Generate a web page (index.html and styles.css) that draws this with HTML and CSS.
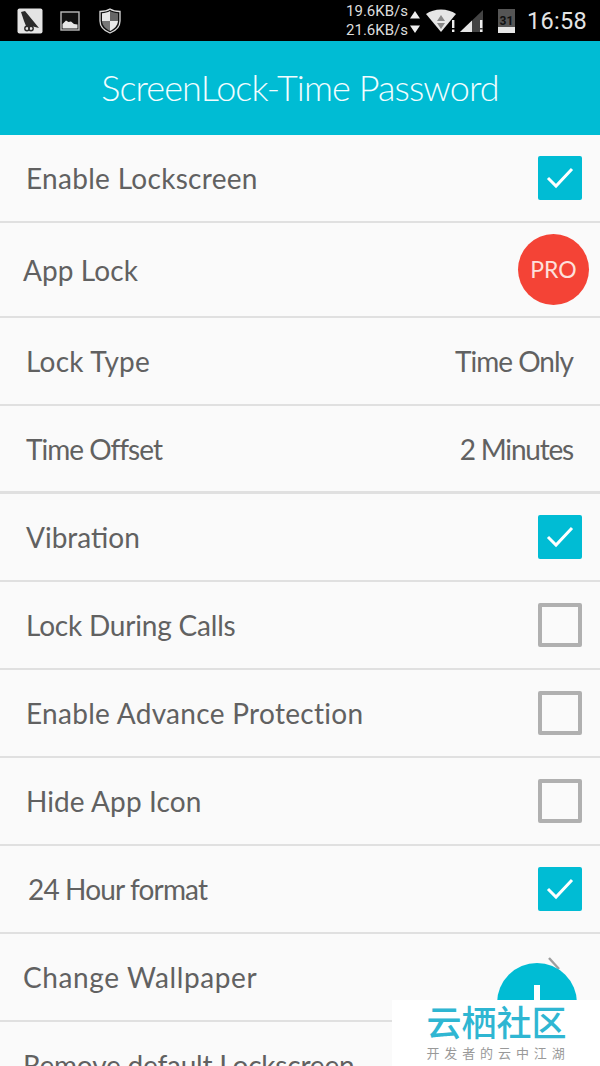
FILE: index.html
```html
<!DOCTYPE html>
<html lang="en">
<head>
<meta charset="utf-8">
<title>ScreenLock-Time Password</title>
<link rel="stylesheet" href="styles.css">
</head>
<body>
<div class="screen">
  <div class="status">
    <div class="status-left">
      <svg class="ic-app" viewBox="0 0 26 26"><rect x="0.5" y="0.5" width="25" height="25" rx="2" fill="#e4e4e4"/><path d="M4 4 L8 3 L22 20 L14 18 L9 18 L7 13 Z" fill="#2a2a2a"/><circle cx="10" cy="20.5" r="2.2" fill="none" stroke="#2a2a2a" stroke-width="1.4"/><circle cx="14" cy="20.5" r="2.2" fill="none" stroke="#2a2a2a" stroke-width="1.4"/></svg>
      <svg class="ic-pic" viewBox="0 0 20 20"><rect x="1" y="1" width="18" height="18" fill="#111" stroke="#bbb" stroke-width="1.4"/><path d="M2.5 17.5 V13 L6 9.5 L8.5 11 L11 10.5 L14 13 L17.5 13.5 V17.5 Z" fill="#e6e6e6"/></svg>
      <svg class="ic-shield" viewBox="0 0 22 26"><path d="M11 1 C14 3 18 3.5 21 3.5 V13 C21 19 16 23 11 25 C6 23 1 19 1 13 V3.5 C4 3.5 8 3 11 1 Z" fill="#111" stroke="#ddd" stroke-width="1.3"/><path d="M11 3 C8.5 4.5 6 5 3 5.2 V13 H11 Z" fill="#e8e8e8"/><path d="M11 3 C13.5 4.5 16 5 19 5.2 V13 H11 Z" fill="#666"/><path d="M3 13 H11 V23 C7 21 3.5 18 3 13 Z" fill="#777"/><path d="M19 13 H11 V23 C15 21 18.5 18 19 13 Z" fill="#e8e8e8"/></svg>
    </div>
    <div class="status-right">
      <div class="speed"><span>19.6KB/s</span><span>21.6KB/s</span></div>
      <svg class="ic-arrows" viewBox="0 0 10 26"><path d="M5 3 L10 10.5 H0 Z M0 17.5 H10 L5 25 Z" fill="#eee"/></svg>
      <svg class="ic-wifi" viewBox="0 0 32 24"><path d="M1 5 C9 -1 23 -1 31 5 L16 23 Z" fill="#e6e6e6"/><path d="M16 6 L20 12 H12 Z M12 14 H20 L16 20 Z" fill="#888"/><rect x="27" y="11" width="2.4" height="8" fill="#eee"/><rect x="27" y="20.5" width="2.4" height="2.5" fill="#eee"/></svg>
      <svg class="ic-signal" viewBox="0 0 24 24"><path d="M0 23 L23 1 V23 Z" fill="#444"/><path d="M0 23 L12 11.5 V23 Z" fill="#e6e6e6"/><rect x="20" y="11" width="2.4" height="8" fill="#eee"/><rect x="20" y="20.5" width="2.4" height="2.5" fill="#eee"/></svg>
      <div class="battery"><span>31</span></div>
      <div class="clock">16:58</div>
    </div>
  </div>
  <header class="bar">ScreenLock-Time Password</header>
  <main class="list">
    <div class="row r88"><span class="sp-p3">Enable Lockscreen</span><span class="check on"><svg viewBox="0 0 44 44"><path d="M10 22 L18 30 L34 13" fill="none" stroke="#fff" stroke-width="3"/></svg></span></div>
    <div class="row r95 tight"><span class="sp-p1">App Lock</span><span class="pro">PRO</span></div>
    <div class="row r88"><span class="sp-p2">Lock Type</span><span class="val sp-m10">Time Only</span></div>
    <div class="row r88 thick"><span class="sp-m10">Time Offset</span><span class="val sp-m12">2 Minutes</span></div>
    <div class="row r88"><span>Vibration</span><span class="check on"><svg viewBox="0 0 44 44"><path d="M10 22 L18 30 L34 13" fill="none" stroke="#fff" stroke-width="3"/></svg></span></div>
    <div class="row r88"><span class="sp-m2">Lock During Calls</span><span class="check"></span></div>
    <div class="row r88"><span class="sp-p3">Enable Advance Protection</span><span class="check"></span></div>
    <div class="row r88"><span class="sp-p1">Hide App Icon</span><span class="check"></span></div>
    <div class="row r88 wide"><span class="sp-m8">24 Hour format</span><span class="check on"><svg viewBox="0 0 44 44"><path d="M10 22 L18 30 L34 13" fill="none" stroke="#fff" stroke-width="3"/></svg></span></div>
    <div class="row r88 tight"><span class="sp-p6">Change Wallpaper</span><svg class="chev" viewBox="0 0 14 14"><path d="M2 1 L12 12" fill="none" stroke="#9e9e9e" stroke-width="2.4"/></svg></div>
    <div class="row r88 tight"><span class="sp-m2">Remove default Lockscreen</span></div>
  </main>
  <div class="fab"><svg viewBox="0 0 80 80"><path d="M40 22 V60 M23 40 H57" stroke="#fff" stroke-width="6" fill="none"/></svg></div>
  <div class="mark"><div class="mark-title">云栖社区</div><div class="mark-sub">开发者的云中江湖</div></div>
</div>
</body>
</html>
```

FILE: styles.css
```css
* { box-sizing: border-box; }
html, body { margin: 0; padding: 0; }
body { background: #fafafa; font-family: "Lato", "Liberation Sans", sans-serif; }
.screen { position: relative; width: 600px; height: 1066px; overflow: hidden; background: #fafafa; }

.status { height: 41px; background: #000; display: flex; justify-content: space-between; align-items: center; padding: 0 13px 0 17px; }
.status-left { display: flex; align-items: center; gap: 17px; }
.status-right { display: flex; align-items: center; }
.ic-app { width: 26px; height: 26px; }
.ic-pic { width: 20px; height: 20px; }
.ic-shield { width: 22px; height: 26px; margin-left: 2px; }
.speed { display: flex; flex-direction: column; font: 15px/19px "Roboto", sans-serif; color: #ddd; margin-top: 1px; }
.ic-arrows { width: 10px; height: 26px; margin-left: 2px; }
.ic-wifi { width: 32px; height: 24px; margin-left: 5px; }
.ic-signal { width: 24px; height: 24px; margin-left: 3px; }
.battery { width: 17px; height: 24px; margin-left: 14px; background: linear-gradient(#555 75%, #e6e6e6 75%); display: flex; justify-content: center; font: bold 12px/24px "Roboto", sans-serif; color: #111; }
.clock { font: 23.5px/30px "Roboto", sans-serif; color: #e4e4e4; margin-left: 12px; letter-spacing: 0.3px; }

.bar { height: 94px; background: #00bcd4; color: #f2fdff; display: flex; align-items: center; justify-content: center; font-size: 36px; font-weight: 300; letter-spacing: -0.9px; padding-bottom: 2px; }

.list { display: flex; flex-direction: column; }
.row { display: flex; align-items: center; justify-content: space-between; padding: 0 18px 0 26px; border-bottom: 2px solid #e0e0e0; font-size: 28px; font-weight: 400; color: #616161; flex: none; }
.r95 { height: 95px; }
.r88 { height: 88px; }
.thick { border-bottom-width: 3px; }
.tight { padding-left: 23px; padding-right: 11px; }
.wide { padding-left: 28px; }
.val { padding-right: 9px; }

.sp-p6 { letter-spacing: 0.6px; }
.sp-p3 { letter-spacing: 0.3px; }
.sp-p2 { letter-spacing: 0.2px; }
.sp-p1 { letter-spacing: 0.1px; }
.sp-m2 { letter-spacing: -0.2px; }
.sp-m8 { letter-spacing: -0.85px; }
.sp-m10 { letter-spacing: -1px; }
.sp-m12 { letter-spacing: -1.2px; }

.check { width: 44px; height: 44px; border: 4px solid #b0b0b0; border-radius: 2px; }
.check.on { border: 0; background: #00bcd4; }
.check svg { display: block; width: 44px; height: 44px; }

.pro { width: 71px; height: 71px; border-radius: 50%; background: #f44336; color: #fde0dc; font: 400 23px/71px "Lato", sans-serif; text-align: center; }
.chev { width: 14px; height: 14px; margin: -26px 28px 0 0; }

.fab { position: absolute; left: 497px; top: 963px; width: 80px; height: 80px; border-radius: 50%; background: #00bcd4; }
.fab svg { display: block; }
.mark { position: absolute; left: 392px; top: 1000px; width: 208px; height: 66px; background: #fff; text-align: center; }
.mark-title { font: 500 35px/42px "Noto Sans CJK SC", sans-serif; color: #2fb6d2; padding-left: 1px; }
.mark-sub { font: 13px/18px "Noto Sans CJK SC", sans-serif; color: #999; letter-spacing: 4.9px; padding: 2px 0 0 4px; }
```
